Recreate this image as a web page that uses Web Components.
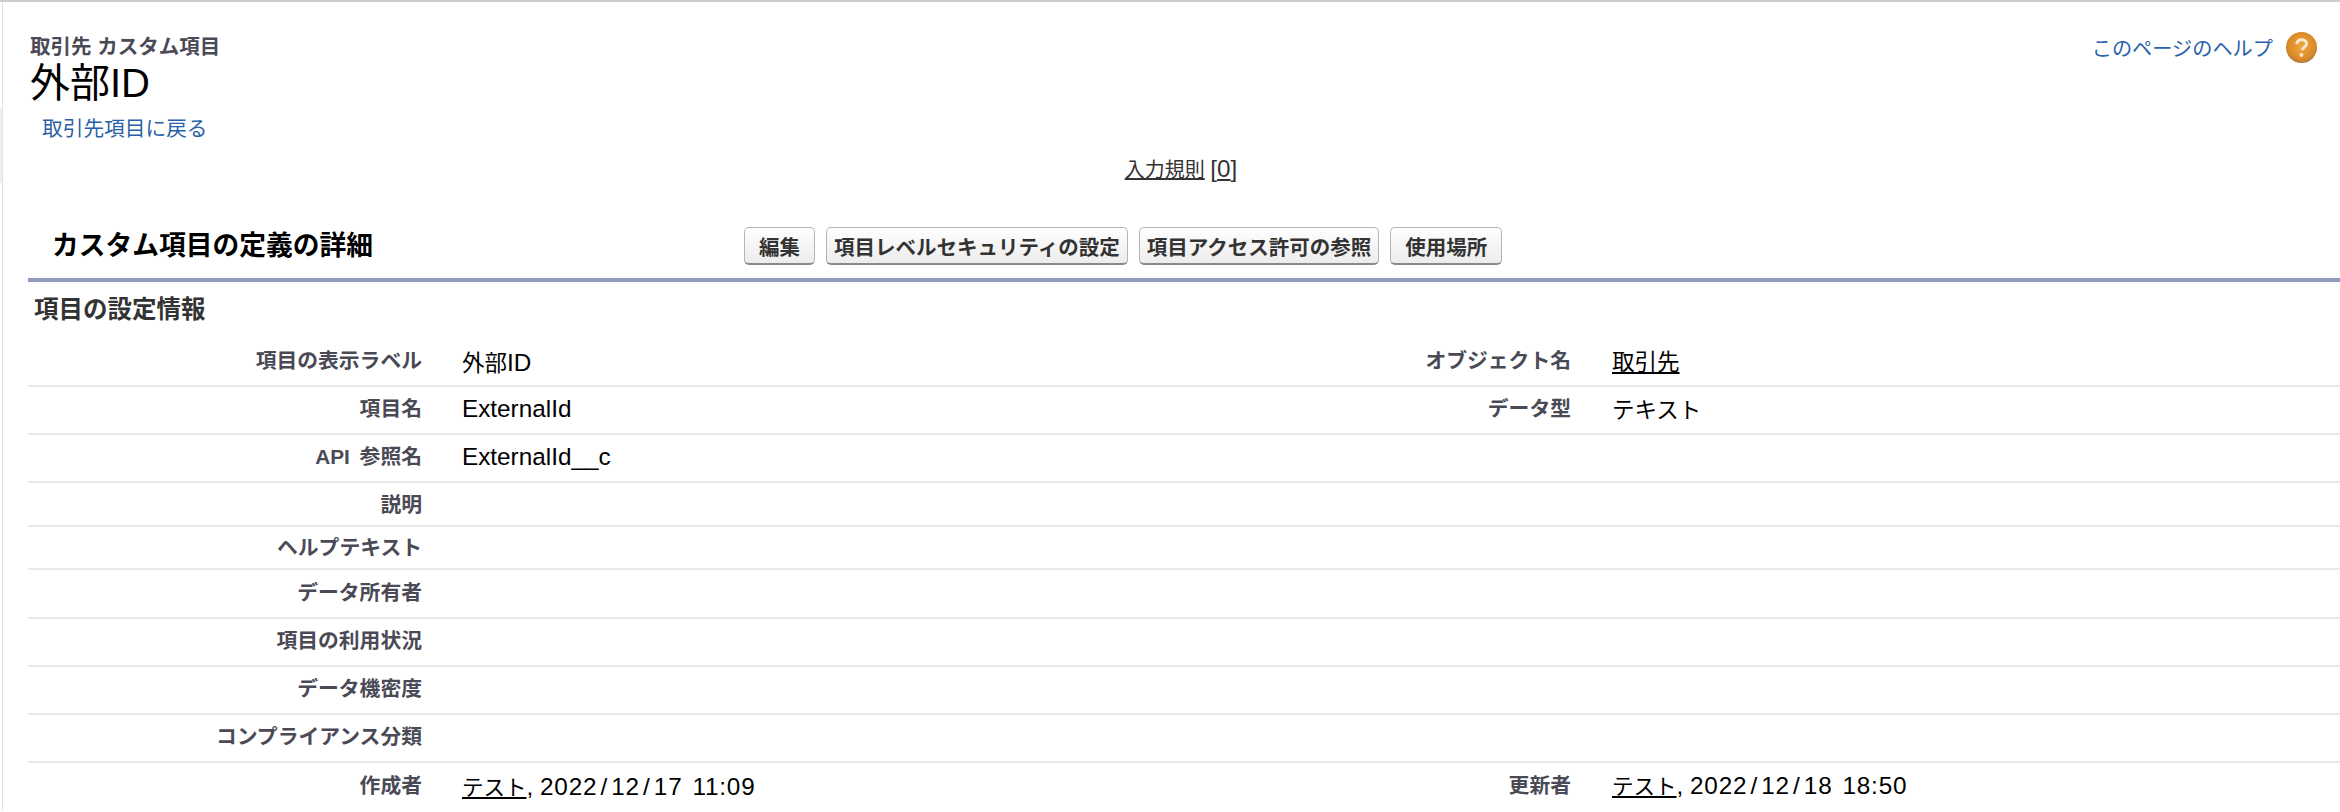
<!DOCTYPE html>
<html lang="ja">
<head>
<meta charset="utf-8">
<title>外部ID</title>
<style>
  html, body { margin: 0; background: #fff; }
  body { font-family: "Liberation Sans", "Noto Sans CJK JP", sans-serif; height: 812px; overflow: hidden; }
</style>
</head>
<body>
<sf-frame>
  <sf-page-header>
    <span slot="type">取引先 カスタム項目</span>
    <span slot="title">外部ID</span>
    <span slot="back">取引先項目に戻る</span>
    <span slot="help">このページのヘルプ</span>
  </sf-page-header>
  <sf-related><u>入力規則</u> <sf-latin>[<u>0</u>]</sf-latin></sf-related>
  <sf-detail heading="カスタム項目の定義の詳細" section="項目の設定情報">
    <sf-button slot="buttons" short>編集</sf-button>
    <sf-button slot="buttons">項目レベルセキュリティの設定</sf-button>
    <sf-button slot="buttons">項目アクセス許可の参照</sf-button>
    <sf-button slot="buttons" short>使用場所</sf-button>

    <sf-row label="項目の表示ラベル" label2="オブジェクト名" h="48">外部<sf-latin>ID</sf-latin><u slot="value2">取引先</u></sf-row>
    <sf-row label="項目名" label2="データ型" h="48"><sf-latin>ExternalId</sf-latin><span slot="value2">テキスト</span></sf-row>
    <sf-row label="API 参照名" h="48"><sf-latin>ExternalId__c</sf-latin></sf-row>
    <sf-row label="説明" h="44" tight></sf-row>
    <sf-row label="ヘルプテキスト" h="43" tight></sf-row>
    <sf-row label="データ所有者" h="49"></sf-row>
    <sf-row label="項目の利用状況" h="48"></sf-row>
    <sf-row label="データ機密度" h="48"></sf-row>
    <sf-row label="コンプライアンス分類" h="48"></sf-row>
    <sf-row label="作成者" label2="更新者" h="48" last><u style="font-size:21.5px">テスト</u><sf-latin>, <sf-date>2022/12/17 11:09</sf-date></sf-latin><span slot="value2"><u style="font-size:21.5px">テスト</u><sf-latin>, <sf-date>2022/12/18 18:50</sf-date></sf-latin></span></sf-row>
  </sf-detail>
</sf-frame>

<script>
// outer page frame, grey hairlines at the top and on the left
class SfFrame extends HTMLElement {
  constructor() {
    super();
    this.attachShadow({mode: 'open'});
    this.shadowRoot.innerHTML = `<style>
      :host { display: block; position: relative; border-top: 2px solid #ccc; height: 810px; box-sizing: border-box; padding-left: 2px; }
      :host::before { content: ""; position: absolute; left: 0; top: 106px; width: 2px; height: 75px; background: #e9eef7; }
      .inner { border-left: 1px solid #e2e2e2; height: 100%; box-sizing: border-box; padding-left: 25px; }
    </style><div class="inner"><slot></slot></div>`;
  }
}

const headerTemplate = document.createElement('template');
headerTemplate.innerHTML = `<style>
  :host { display: flex; justify-content: space-between; align-items: flex-start; padding: 33px 23px 0 2px; height: 117px; box-sizing: border-box; }
  .type { font-size: 20.5px; line-height: 24px; font-weight: 700; color: #4a4a56; }
  .title { font-size: 40px; line-height: 48px; color: #000; }
  .back { font-size: 20.7px; line-height: 28px; color: #2a62a8; margin: 8px 0 0 12px; }
  .help { display: flex; align-items: center; gap: 13px; font-size: 20.2px; color: #2a62a8; margin-top: -3px; }
  svg { display: block; }
</style>
<div>
  <div class="type"><slot name="type"></slot></div>
  <div class="title"><slot name="title"></slot></div>
  <div class="back"><slot name="back"></slot></div>
</div>
<div class="help">
  <slot name="help"></slot>
  <svg width="31" height="31" viewBox="0 0 31 31">
    <defs>
      <radialGradient id="g" cx="50%" cy="45%" r="55%">
        <stop offset="0" stop-color="#eda640"/>
        <stop offset=".75" stop-color="#dd8c28"/>
        <stop offset="1" stop-color="#b47a3a"/>
      </radialGradient>
    </defs>
    <circle cx="15.5" cy="15.5" r="15.5" fill="url(#g)"/>
    <path d="M10.800 12.200c.2-3 2.300-4.500 4.900-4.500 2.800 0 4.800 1.600 4.800 4 0 1.900-1.100 2.800-2.400 3.700-1.200.8-1.700 1.400-1.700 2.900" fill="none" stroke="#f9e6cc" stroke-width="3"/>
    <circle cx="15.400" cy="23" r="2" fill="#f9e6cc"/>
  </svg>
</div>`;

class SfPageHeader extends HTMLElement {
  constructor() {
    super();
    this.attachShadow({mode: 'open'});
    this.shadowRoot.appendChild(headerTemplate.content.cloneNode(true));
  }
}

class SfRelated extends HTMLElement {
  constructor() {
    super();
    this.attachShadow({mode: 'open'});
    this.shadowRoot.innerHTML = `<style>
      :host { display: block; text-align: center; font-size: 20px; line-height: 30px; color: #333; margin-top: 35px; height: 73px; padding-right: 6px; }
    </style><slot></slot>`;
  }
}

class SfButton extends HTMLElement {
  constructor() {
    super();
    this.attachShadow({mode: 'open'});
    this.shadowRoot.innerHTML = `<style>
      :host { display: inline-flex; align-items: center; justify-content: center; box-sizing: border-box; height: 38px; padding: 0 7px;
        border: 1px solid #b5b5b5; border-bottom: 2px solid #8a8a8a; border-radius: 5px;
        background: linear-gradient(#fff, #f3f3f3 60%, #ececec);
        font-size: 20.5px; font-weight: 700; color: #333; white-space: nowrap; }
      :host([short]) { padding: 0 14px; }
    </style><slot></slot>`;
  }
}

const detailTemplate = document.createElement('template');
detailTemplate.innerHTML = `<style>
  :host { display: block; }
  .bar { display: flex; align-items: flex-start; height: 55px; box-sizing: border-box; border-bottom: 4px solid #8e9dbe; }
  h2 { margin: 0; width: 716px; box-sizing: border-box; padding-left: 24px; font-size: 26.75px; line-height: 38px; font-weight: 700; color: #000; }
  .buttons { display: flex; gap: 11px; }
  h3 { margin: 0; height: 57px; padding: 9px 0 0 6px; box-sizing: border-box; font-size: 24.5px; line-height: 38px; font-weight: 700; color: #333; }
</style>
<div class="bar">
  <h2></h2>
  <div class="buttons"><slot name="buttons"></slot></div>
</div>
<h3></h3>
<slot></slot>`;

class SfDetail extends HTMLElement {
  constructor() {
    super();
    this.attachShadow({mode: 'open'});
    this.shadowRoot.appendChild(detailTemplate.content.cloneNode(true));
    this.shadowRoot.querySelector('h2').innerText = this.getAttribute('heading');
    this.shadowRoot.querySelector('h3').innerText = this.getAttribute('section');
  }
}

const rowTemplate = document.createElement('template');
rowTemplate.innerHTML = `<style>
  :host { display: grid; grid-template-columns: 394px 749px 400px 1fr; align-items: center; box-sizing: border-box; border-bottom: 2px solid #e9e9e9; color: #000; }
  :host([last]) { border-bottom: 0; }
  .label { text-align: right; font-size: 20.8px; font-weight: 700; color: #4a4a56; padding-bottom: 6px; word-spacing: 4px; }
  :host([tight]) .label { padding-bottom: 3px; }
  .value { padding-left: 40px; padding-bottom: 3px; font-size: 22.5px; }
  .value.second { padding-left: 41px; padding-bottom: 5px; }
</style>
<div class="label"></div>
<div class="value"><slot></slot></div>
<div class="label" id="l2"></div>
<div class="value second"><slot name="value2"></slot></div>`;

class SfRow extends HTMLElement {
  constructor() {
    super();
    this.attachShadow({mode: 'open'});
    this.shadowRoot.appendChild(rowTemplate.content.cloneNode(true));
    this.shadowRoot.querySelector('.label').innerText = this.getAttribute('label');
    this.shadowRoot.querySelector('#l2').innerText = this.getAttribute('label2') || '';
    this.style.height = this.getAttribute('h') + 'px';
  }
}

// latin runs are set larger than the kana next to them
class SfLatin extends HTMLElement {
  constructor() {
    super();
    this.attachShadow({mode: 'open'});
    this.shadowRoot.innerHTML = `<style>:host { display: inline; font-size: 24.3px; }</style><slot></slot>`;
  }
}

// the reference font has much wider slashes than Liberation Sans
class SfDate extends HTMLElement {
  constructor() {
    super();
    const html = this.textContent.replace(/\//g, '<span class="sl">/</span>');
    this.attachShadow({mode: 'open'});
    this.shadowRoot.innerHTML = `<style>
      :host { display: inline; letter-spacing: .8px; word-spacing: 2.5px; }
      .sl { padding: 0 3.2px; }
    </style>${html}`;
  }
}

window.customElements.define('sf-frame', SfFrame);
window.customElements.define('sf-page-header', SfPageHeader);
window.customElements.define('sf-related', SfRelated);
window.customElements.define('sf-button', SfButton);
window.customElements.define('sf-detail', SfDetail);
window.customElements.define('sf-row', SfRow);
window.customElements.define('sf-latin', SfLatin);
window.customElements.define('sf-date', SfDate);
</script>
</body>
</html>
